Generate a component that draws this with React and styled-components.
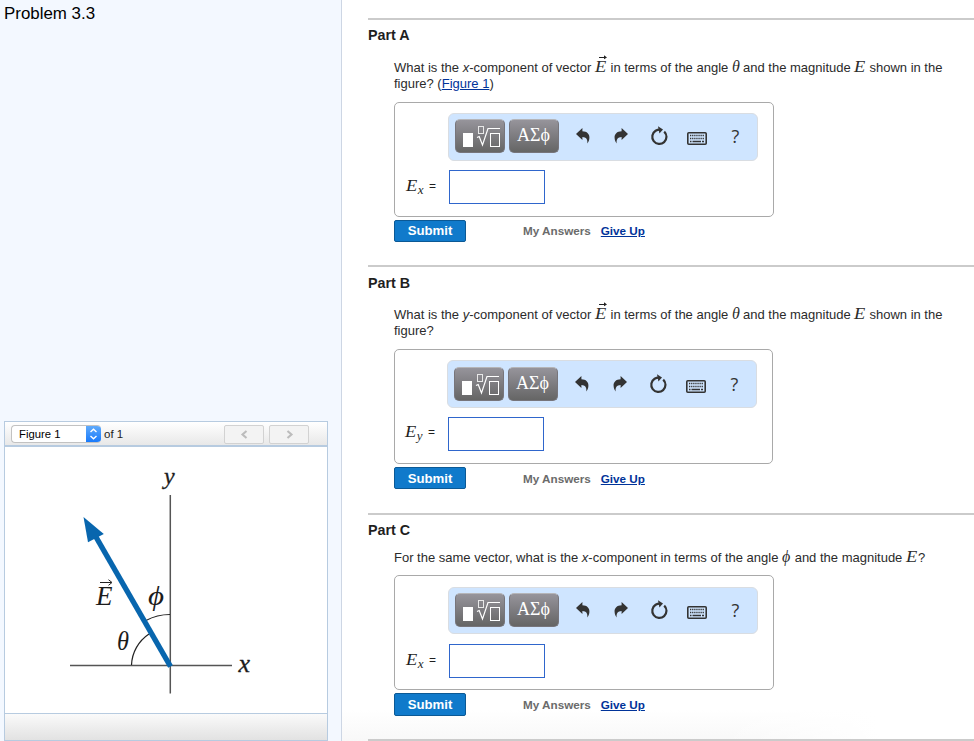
import React from 'react'

import styled, { createGlobalStyle } from 'styled-components'

const GlobalStyle = createGlobalStyle`
  * {
    box-sizing: border-box;
  }

  body {
    margin: 0;
    background: #fff;
    color: #1f1f1f;
    font-family: 'Liberation Sans', Arial, sans-serif;
    overflow: hidden;
  }
`

const toolbarIcons = ['undo', 'redo', 'reset', 'keyboard']

const App = () => (
  <Page>
    <GlobalStyle />
    <Sidebar>
      <ProblemTitle>Problem 3.3</ProblemTitle>
      <FigurePanel />
    </Sidebar>
    <Content>
      <Part title="Part A" height={247} titleTop={7} textShift={2} answer={{ sub: 'x', labelShift: 2 }}>
        <Question top={17} bottom={10}>
          What is the <i>x</i>-component of vector <VectorE /> in terms of the angle{' '}
          <Symbol width={7.5}>θ</Symbol> and the magnitude <Symbol width={11.5} wide>E</Symbol> shown in the
          <br />
          figure? (<Link href="#figure">Figure 1</Link>)
        </Question>
      </Part>
      <Part title="Part B" height={248} titleTop={8} textShift={0} answer={{ sub: 'y', labelShift: 4, narrow: true }}>
        <Question top={16} bottom={10}>
          What is the <i>y</i>-component of vector <VectorE /> in terms of the angle{' '}
          <Symbol width={7.5}>θ</Symbol> and the magnitude <Symbol width={11.5} wide>E</Symbol> shown in the
          <br />
          figure?
        </Question>
      </Part>
      <Part title="Part C" height={226} titleTop={7} textShift={1} answer={{ sub: 'x', labelShift: 2, short: true }}>
        <Question top={12} bottom={9}>
          For the same vector, what is the <i>x</i>-component in terms of the angle{' '}
          <Symbol width={9}>ϕ</Symbol> and the magnitude <Symbol width={12} wide>E</Symbol>?
        </Question>
      </Part>
      <Rule />
    </Content>
  </Page>
)

const Part = ({ title, height, titleTop, textShift, answer, children }) => (
  <PartSection $height={height}>
    <Rule />
    <PartTitle $top={titleTop}>{title}</PartTitle>
    <PartBody>
      {children}
      <Answer {...answer} />
      <Actions>
        <Submit $short={answer.short} $shift={textShift}>Submit</Submit>
        <ActionLinks $shift={textShift}>
          <MyAnswers>My Answers</MyAnswers>
          <GiveUp href="#give-up">Give Up</GiveUp>
        </ActionLinks>
      </Actions>
    </PartBody>
  </PartSection>
)

const Question = ({ top, bottom, children }) => (
  <QuestionText $top={top} $bottom={bottom}>{children}</QuestionText>
)

const Symbol = ({ width, wide, children }) => (
  <MathBox $width={width}>
    <Glyph $wide={wide}>{children}</Glyph>
  </MathBox>
)

const VectorE = () => (
  <MathBox $width={12}>
    <Glyph $wide>E</Glyph>
    <VectorArrow viewBox="0 0 8 5">
      <path d="M0 2.5H6" stroke="#222" strokeWidth="1" />
      <path d="M5 0.3L8 2.5L5 4.3Z" fill="#222" />
    </VectorArrow>
  </MathBox>
)

const Answer = ({ sub, labelShift, narrow, short }) => (
  <AnswerBox $narrow={narrow} $short={short}>
    <Toolbar $short={short} $low={narrow}>
      <ToolButton>
        <TemplateIcon />
      </ToolButton>
      <ToolButton>ΑΣϕ</ToolButton>
      <IconRow>
        {toolbarIcons.map(name => (
          <IconButton key={name}>
            <ToolIcon name={name} />
          </IconButton>
        ))}
        <HelpButton>?</HelpButton>
      </IconRow>
    </Toolbar>
    <AnswerRow $short={short}>
      <AnswerLabel $shift={labelShift}>
        <Variable>
          <Glyph $wide>E</Glyph>
          <sub>{sub}</sub>
        </Variable>
        <span>=</span>
      </AnswerLabel>
      <AnswerInput />
    </AnswerRow>
  </AnswerBox>
)

const TemplateIcon = () => (
  <svg width="40" height="24" viewBox="0 0 40 24" fill="none">
    <rect x="3" y="8" width="10" height="14" fill="#fff" />
    <rect x="18.5" y="1.5" width="5" height="7" stroke="#e8e8e8" />
    <path d="M17 12.5L19.2 11.5L22.5 20L28 3.5H40" stroke="#fff" strokeWidth="1.2" />
    <rect x="30.5" y="8.5" width="9" height="13" stroke="#fff" />
  </svg>
)

const ToolIcon = ({ name }) => {
  if (name === 'undo' || name === 'redo') {
    return (
      <svg width="16" height="18" viewBox="0 0 16 18">
        <path
          d="M1 7L7.4 1V4.3C12 4.3 14.7 7.2 14.4 11C14.3 13 13.5 15 12.3 16.5C12.8 12.2 11.3 10 7.4 9.9V13Z"
          fill="#333"
          transform={name === 'redo' ? 'translate(16 0) scale(-1 1)' : undefined}
        />
      </svg>
    )
  }
  if (name === 'reset') {
    return (
      <ResetSvg width="18" height="20" viewBox="0 0 18 20">
        <path d="M14.2 5.6A7.1 7.1 0 1 1 5.6 4.8Q7.3 3.7 10 3.7" fill="none" stroke="#333" strokeWidth="2.2" />
        <path d="M8 0.3L13 3.5L9.4 7.4Z" fill="#333" />
      </ResetSvg>
    )
  }
  return (
    <KeyboardSvg width="20" height="13" viewBox="0 0 20 13" fill="none">
      <rect x="0.8" y="0.8" width="18.4" height="11.4" rx="1" stroke="#333" strokeWidth="1.6" />
      <path d="M3 3.5H17M3 6.5H17" stroke="#333" strokeWidth="1.3" strokeDasharray="1.3 0.8" />
      <path d="M3 9.5H4.5M5.5 9.5H14M15 9.5H17" stroke="#333" strokeWidth="1.3" />
    </KeyboardSvg>
  )
}

const FigurePanel = () => (
  <Panel>
    <PanelHeader>
      <FigureSelect>
        Figure 1
        <Stepper>
          <svg width="9" height="12" viewBox="0 0 9 12" fill="none" stroke="#fff" strokeWidth="1.4">
            <path d="M1.5 4L4.5 1.2L7.5 4M1.5 8L4.5 10.8L7.5 8" />
          </svg>
        </Stepper>
      </FigureSelect>
      <FigureCount>of 1</FigureCount>
      <NavButton><Chevron points="6.5,1 2.5,4.5 6.5,8" /></NavButton>
      <NavButton><Chevron points="2.5,1 6.5,4.5 2.5,8" /></NavButton>
    </PanelHeader>
    <Diagram />
    <PanelFooter />
  </Panel>
)

const Chevron = ({ points }) => (
  <svg width="9" height="9" viewBox="0 0 9 9" fill="none">
    <polyline points={points} stroke="#bcbcbc" strokeWidth="2.1" />
  </svg>
)

const Diagram = () => (
  <DiagramSvg viewBox="5 447 322 266">
    <g stroke="#555" strokeWidth="1.5" fill="none">
      <path d="M170.3 495V693.5M70 665.5H232" />
    </g>
    <g stroke="#222" strokeWidth="1.2" fill="none">
      <path d="M131.5 665A39 39 0 0 1 149 634" />
      <path d="M146 620.5Q157 614.5 170 614.5" />
    </g>
    <path d="M170.5 666.5L96 537" stroke="#0866ae" strokeWidth="5.4" />
    <path d="M83.5 517L103.8 534L88 542.3Z" fill="#0866ae" />
    <path d="M100 582.5H111.5M108.5 579.7L112 582.5L108.5 585.3" fill="none" stroke="#222" />
    <Label x="164" y="484" fontSize="24" $heavy>y</Label>
    <Label x="238.5" y="672" fontSize="26" $heavy>x</Label>
    <Label x="96" y="605" fontSize="27">E</Label>
    <Label x="148" y="605" fontSize="27" textLength="16" lengthAdjust="spacingAndGlyphs">ϕ</Label>
    <Label x="117" y="649.5" fontSize="27" textLength="12" lengthAdjust="spacingAndGlyphs">θ</Label>
  </DiagramSvg>
)

const Page = styled.div`
  display: flex;
  width: 974px;
  height: 741px;
  overflow: hidden;
`

const Sidebar = styled.aside`
  display: flex;
  flex-direction: column;
  justify-content: space-between;
  flex: 0 0 342px;
  padding: 4px 13px 0 4px;
  background: #f3f8ff;
  border-right: 1px solid #cdd6e4;
`

const ProblemTitle = styled.h1`
  margin: 0;
  color: #000;
  font-size: 16.9px;
  font-weight: 400;
  line-height: 20px;
`

const Panel = styled.section`
  display: flex;
  flex-direction: column;
  width: 324px;
  height: 320px;
  border: 1px solid #b7cbe0;
  background: #fff;
`

const PanelHeader = styled.header`
  display: flex;
  align-items: center;
  flex: 0 0 25px;
  padding-left: 6px;
  border-bottom: 2px solid #b7cbe0;
  background: linear-gradient(#fff, #e8e8e8);
`

const FigureSelect = styled.div`
  display: flex;
  align-items: center;
  justify-content: space-between;
  width: 90px;
  height: 18px;
  padding-left: 7px;
  border: 1px solid #c2c2c2;
  border-right: 0;
  border-radius: 4px;
  background: #fff;
  color: #000;
  font-size: 11.3px;
  overflow: hidden;
`

const Stepper = styled.span`
  display: flex;
  align-items: center;
  justify-content: center;
  width: 15px;
  height: 18px;
  background: linear-gradient(#64adfb, #1477fb);
`

const FigureCount = styled.span`
  flex: 1;
  margin-left: 3px;
  color: #222;
  font-size: 11.5px;
`

const NavButton = styled.button`
  display: flex;
  align-items: center;
  justify-content: center;
  width: 40px;
  height: 19px;
  margin: 1px 5px 0 0;
  padding: 0;
  border: 1px solid #d2d2d2;
  border-radius: 2px;
  background: #f3f3f3;

  &:last-child {
    margin-right: 18px;
  }
`

const DiagramSvg = styled.svg`
  flex: 0 0 266px;
  width: 322px;
`

const Label = styled.text`
  fill: #1c1c1c;
  stroke: #1c1c1c;
  stroke-width: ${({ $heavy }) => ($heavy ? 0.3 : 0)};
  font-family: 'Liberation Serif', serif;
  font-style: italic;
`

const PanelFooter = styled.footer`
  flex: 1;
  border-top: 1px solid #b7cbe0;
  background: linear-gradient(#fafafa, #e2e2e2);
`

const Content = styled.main`
  flex: 1;
  padding: 18px 0 0 26px;
  background:
    linear-gradient(to right, transparent 60%, #fff 85%),
    linear-gradient(#fff 710px, #f8f8f8 741px);
`

const Rule = styled.div`
  height: 2px;
  background: #cbcbcb;
`

const PartSection = styled.section`
  display: flex;
  flex-direction: column;
  height: ${({ $height }) => $height}px;
`

const PartTitle = styled.h2`
  margin: ${({ $top }) => $top}px 0 0;
  font-size: 14.3px;
  font-weight: 700;
  line-height: 16px;
`

const PartBody = styled.div`
  display: flex;
  flex-direction: column;
  padding-left: 26px;
`

const QuestionText = styled.p`
  margin: ${({ $top, $bottom }) => `${$top}px 0 ${$bottom}px`};
  color: #2b2b2b;
  font-size: 13px;
  line-height: 16px;
  white-space: nowrap;
`

const MathBox = styled.span`
  position: relative;
  display: inline-block;
  width: ${({ $width }) => $width}px;
  font-size: 16px;
  line-height: 14px;
`

const Glyph = styled.span`
  display: inline-block;
  font-family: 'Liberation Serif', serif;
  font-style: italic;
  transform: scaleX(${({ $wide }) => ($wide ? 1.15 : 1)});
  transform-origin: left;
`

const VectorArrow = styled.svg`
  position: absolute;
  top: -5px;
  left: 4px;
  width: 8px;
  height: 5px;
`

const Link = styled.a`
  color: #003399;
  text-decoration: underline;
`

const AnswerBox = styled.div`
  display: flex;
  flex-direction: column;
  align-items: flex-end;
  width: ${({ $narrow }) => ($narrow ? 379 : 380)}px;
  height: 115px;
  padding: ${({ $short }) => ($short ? 11 : 10)}px 15px 0 0;
  border: 1px solid #a9a9a9;
  border-radius: 5px;
  background: #fff;
`

const Toolbar = styled.div`
  display: flex;
  width: 310px;
  height: ${({ $short }) => ($short ? 47 : 48)}px;
  padding: ${({ $low }) => ($low ? 6 : 5)}px 0 0 5.5px;
  border: 1px solid #d9dde2;
  border-radius: 6px;
  background: #cfe5ff;
`

const ToolButton = styled.button`
  display: flex;
  align-items: center;
  justify-content: center;
  flex: 0 0 50px;
  height: 34px;
  margin-right: 4px;
  padding: 0 0 2px;
  border: 1px solid #77757b;
  border-top-color: #b5b5b8;
  border-radius: 5px;
  background: linear-gradient(#96949b, #656565);
  color: #fff;
  font-family: 'Liberation Serif', serif;
  font-size: 18px;

  svg {
    flex: none;
    margin-top: 4px;
  }
`

const IconRow = styled.div`
  display: flex;
  flex: none;
  height: 34px;
  margin-left: 1px;
`

const IconButton = styled.span`
  display: flex;
  align-items: center;
  justify-content: center;
  width: 38px;
  color: #333;
`

const HelpButton = styled(IconButton)`
  padding: 0 0 0 2px;
  font-family: 'Open Sans', sans-serif;
  font-size: 18px;
`

const ResetSvg = styled.svg`
  margin-left: 1px;
`

const KeyboardSvg = styled.svg`
  margin-top: 5px;
`

const AnswerRow = styled.div`
  display: flex;
  width: 352px;
  margin-top: ${({ $short }) => ($short ? 10 : 9)}px;
`

const AnswerLabel = styled.div`
  display: flex;
  align-items: center;
  justify-content: space-between;
  width: 30px;
  height: 34px;
  margin-right: 13px;
  padding-bottom: ${({ $shift }) => $shift}px;
  font-size: 12px;
`

const Variable = styled.span`
  font-size: 16px;

  sub {
    margin-left: 2px;
    font-family: 'Liberation Serif', serif;
    font-size: 13px;
    font-style: italic;
    line-height: 0;
    vertical-align: -3px;
  }
`

const AnswerInput = styled.input`
  width: 96px;
  height: 34px;
  padding: 0 4px;
  border: 1px solid #2f66cc;
  background: #fff;
`

const Actions = styled.div`
  display: flex;
  align-items: center;
  margin-top: 3px;
`

const Submit = styled.button`
  width: 72px;
  height: ${({ $short }) => ($short ? 23 : 22)}px;
  margin-right: 57px;
  padding: 0 0 ${({ $shift }) => $shift}px;
  border: 1px solid #0b5995;
  border-radius: 2px;
  background: #107acb;
  color: #fff;
  font-family: inherit;
  font-size: 13.2px;
  font-weight: 700;
`

const ActionLinks = styled.div`
  display: flex;
  padding-bottom: ${({ $shift }) => $shift}px;
  font-size: 11.7px;
  font-weight: 700;
`

const MyAnswers = styled.span`
  margin-right: 10px;
  color: #6b6b6b;
`

const GiveUp = styled.a`
  color: #003399;
  text-decoration: underline;
`

export default App
